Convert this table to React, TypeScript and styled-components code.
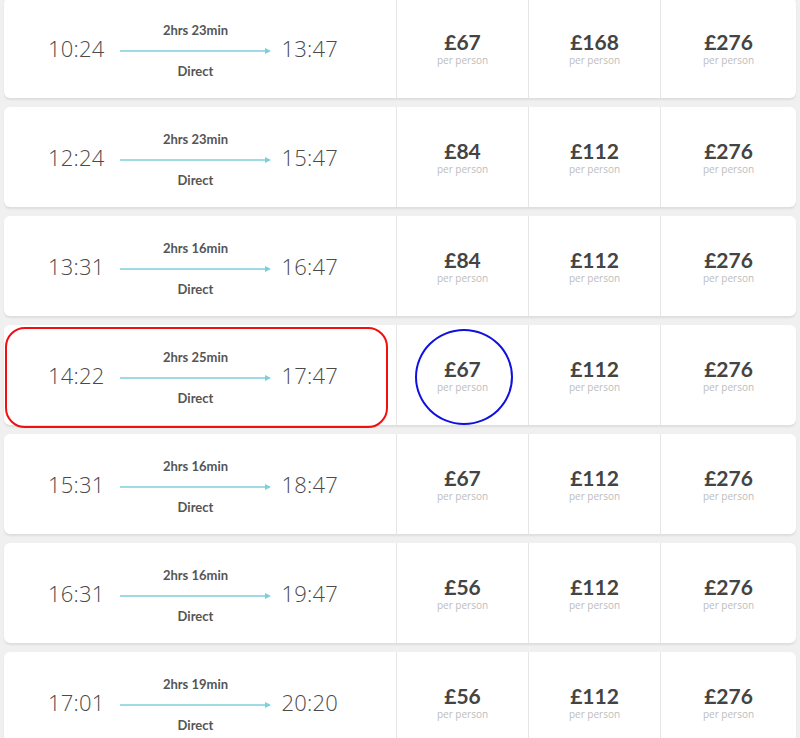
import React from 'react';
import styled, { createGlobalStyle } from 'styled-components';

const GlobalStyle = createGlobalStyle`
  body {
    margin: 0;
    background: #f0f0f0;
    font-family: "Lato", "Open Sans", sans-serif;
  }
`;

type Journey = {
    dep: string;
    arr: string;
    duration: string;
    prices: string[];
    highlight?: boolean;
};

const journeys: Journey[] = [
    {dep: '10:24', arr: '13:47', duration: '2hrs 23min', prices: ['67', '168', '276']},
    {dep: '12:24', arr: '15:47', duration: '2hrs 23min', prices: ['84', '112', '276']},
    {dep: '13:31', arr: '16:47', duration: '2hrs 16min', prices: ['84', '112', '276']},
    {dep: '14:22', arr: '17:47', duration: '2hrs 25min', prices: ['67', '112', '276'], highlight: true},
    {dep: '15:31', arr: '18:47', duration: '2hrs 16min', prices: ['67', '112', '276']},
    {dep: '16:31', arr: '19:47', duration: '2hrs 16min', prices: ['56', '112', '276']},
    {dep: '17:01', arr: '20:20', duration: '2hrs 19min', prices: ['56', '112', '276']},
];

const Arrow = () => (
    <svg width="152" height="8" viewBox="0 0 152 8">
        <line x1="0" y1="4" x2="146" y2="4" stroke="#7dcfdc" strokeWidth="1.5"/>
        <path d="M145 1 L151 4 L145 7 Z" fill="#7dcfdc"/>
    </svg>
);

export default function App() {
    return (
        <>
            <GlobalStyle/>
            <List>
                {journeys.map((j, i) => (
                    <Card key={i}>
                        <TimeSection>
                            {j.highlight && <RedMark/>}
                            <Time>{j.dep}</Time>
                            <Route>
                                <Duration>{j.duration}</Duration>
                                <Arrow/>
                                <Changes>Direct</Changes>
                            </Route>
                            <Time>{j.arr}</Time>
                        </TimeSection>
                        {j.prices.map((p, k) => (
                            <PriceCell key={k}>
                                {j.highlight && k === 0 && <BlueMark/>}
                                <Price>£{p}</Price>
                                <PerPerson>per person</PerPerson>
                            </PriceCell>
                        ))}
                    </Card>
                ))}
            </List>
        </>
    );
}

const List = styled.div`
    display: flex;
    flex-direction: column;
    gap: 9px;
    padding: 0 4px;
    margin-top: -2px;
`;

const Card = styled.div`
    display: grid;
    grid-template-columns: 393px 132px 132px 1fr;
    height: 100px;
    background: #fff;
    border-radius: 6px;
    box-shadow: 0 2px 2px rgba(0, 0, 0, 0.08);
`;

const TimeSection = styled.div`
    position: relative;
    display: flex;
    align-items: center;
    justify-content: center;
    padding-right: 14px;
    border-right: 1px solid #e6e6e6;
`;

const Time = styled.span`
    font-family: "Open Sans", sans-serif;
    font-weight: 300;
    font-size: 22px;
    color: #4a4a4a;
    letter-spacing: 0.2px;
`;

const Route = styled.div`
    display: flex;
    flex-direction: column;
    align-items: center;
    margin: 5px 10px 0 15px;

    svg {
        margin: 9px 0 8px;
    }
`;

const Duration = styled.span`
    font-family: "Lato", sans-serif;
    font-weight: 700;
    font-size: 13px;
    line-height: 16px;
    color: #555;
`;

const Changes = styled(Duration)``;

const PriceCell = styled.div`
    position: relative;
    display: flex;
    flex-direction: column;
    align-items: center;
    justify-content: center;
    border-right: 1px solid #e6e6e6;

    &:last-child {
        border-right: none;
    }
`;

const Price = styled.span`
    font-family: "Lato", sans-serif;
    font-weight: 700;
    font-size: 21px;
    line-height: 24px;
    color: #444;
`;

const PerPerson = styled.span`
    font-family: "Open Sans", sans-serif;
    font-size: 10px;
    line-height: 12px;
    color: #bdbdbd;
`;

const RedMark = styled.div`
    position: absolute;
    left: 1px;
    top: 2px;
    width: 383px;
    height: 101px;
    border: 2px solid #f01010;
    border-radius: 20px;
    box-sizing: border-box;
    pointer-events: none;
`;

const BlueMark = styled.div`
    position: absolute;
    left: 18px;
    top: 4px;
    width: 98px;
    height: 96px;
    border: 2px solid #1010e0;
    border-radius: 50%;
    box-sizing: border-box;
    pointer-events: none;
`;
